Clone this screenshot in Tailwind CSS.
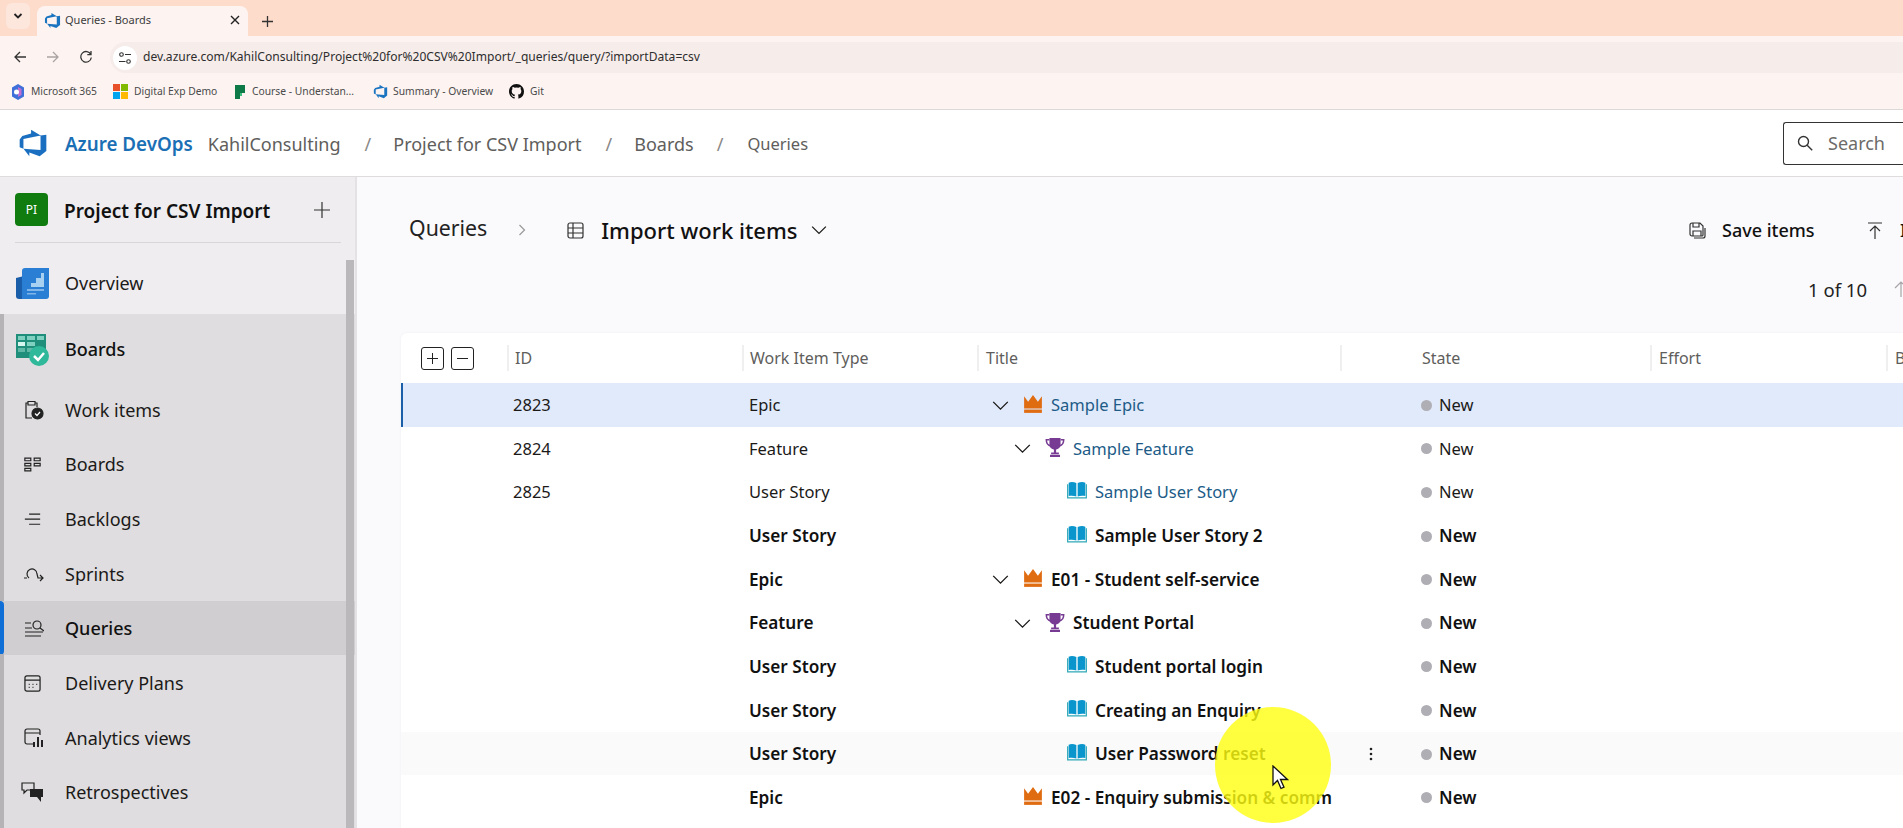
<!DOCTYPE html>
<html lang="en">
<head>
<meta charset="UTF-8">
<title>Queries - Boards</title>
<script src="https://cdn.jsdelivr.net/npm/@tailwindcss/browser@4"></script>
</head>
<body class="h-[828px] w-[1903px] overflow-hidden bg-white font-['Noto_Sans',sans-serif] text-[#1b1a19]">
<svg class="hidden">
  <symbol id="ado" viewBox="0 0 18 18"><path fill="currentColor" d="M17 4v9.74l-4 3.28-6.2-2.26V17l-3.51-4.59 10.23.8V4.44zm-3.41.49L7.85 1v2.29L2.58 4.84 1 6.87v4.61l2.26 1V6.57z"/></symbol>
  <symbol id="crown" viewBox="0 0 18 18"><path fill="#e06c12" d="M1 2l3.6 5L9 1l4.4 6L17 2v11H1z"/><path fill="#e06c12" d="M1 14h16v3H1z"/></symbol>
  <symbol id="trophy" viewBox="0 0 18 18"><path fill="none" stroke="#773b93" stroke-width="1.4" d="M4 2.5H1.2c0 3 1 5 3.8 5.5M14 2.5h2.8c0 3-1 5-3.8 5.5"/><path fill="#773b93" d="M4 1h10v6c0 2.6-2 4-4 4.2V14h2.5v1.6H5.500V14H8v-2.800C6 11 4 9.600 4 7z"/><path fill="#773b93" d="M4.500 16h9v2h-9z"/></symbol>
  <symbol id="book" viewBox="0 0 18 18"><path fill="#0a96cc" d="M1.500 1.500C3.500.8 6 .8 8.400 1.800V14C6 13 3.500 13 1.500 13.600zM16.500 1.500C14.500.8 12 .8 9.600 1.800V14C12 13 14.500 13 16.500 13.600z"/><path fill="none" stroke="#2fa8b8" stroke-width="1.100" d="M.6 3v12.200h16.800V3"/></symbol>
  <symbol id="chev" viewBox="0 0 14 14"><path fill="none" stroke="#1b1a19" stroke-width="1.100" d="M1 4l6 6 6-6"/></symbol>
</svg>

<!-- browser chrome -->
<div class="flex h-[36px] items-end bg-[#fedccb]">
  <div class="mb-[5px] ml-[6px] flex h-[26px] w-[24px] items-center justify-center self-center rounded-md bg-[#fde6dc]">
    <svg width="10" height="10" viewBox="0 0 10 10"><path fill="none" stroke="#222" stroke-width="1.800" d="M1.500 3l3.500 3.500L8.500 3"/></svg>
  </div>
  <div class="ml-[7px] flex h-[30px] w-[211px] items-center rounded-t-lg bg-[#fdf4f2] pb-[2px] pl-[7px] pr-[8px]">
    <svg class="h-[17px] w-[17px] text-[#1b74c0]"><use href="#ado"/></svg>
    <span class="ml-[4px] flex-1 text-[11px] text-[#3c3c3c]">Queries - Boards</span>
    <svg width="10" height="10" viewBox="0 0 10 10"><path stroke="#222" stroke-width="1.400" d="M1 1l8 8M9 1l-8 8"/></svg>
  </div>
  <svg class="mb-[9px] ml-[14px]" width="11" height="11" viewBox="0 0 11 11"><path stroke="#333" stroke-width="1.300" d="M5.500 0v11M0 5.500h11"/></svg>
</div>
<div class="flex h-[38px] items-start bg-[#fdf4f2] pl-[13px] pt-[6px]">
  <svg class="mt-[8px]" width="14" height="14" viewBox="0 0 14 14" fill="none" stroke="#333" stroke-width="1.300"><path d="M13 7H2M7 2L2 7l5 5"/></svg>
  <svg class="ml-[19px] mt-[8px]" width="14" height="14" viewBox="0 0 14 14" fill="none" stroke="#a9a3a3" stroke-width="1.300"><path d="M1 7h11M7 2l5 5-5 5"/></svg>
  <svg class="ml-[19px] mt-[8px]" width="14" height="14" viewBox="0 0 14 14" fill="none" stroke="#333" stroke-width="1.300"><path d="M11.800 4.500A5.300 5.300 0 1 0 12.300 7.500M12 1v3.700H8.300"/></svg>
  <div class="ml-[17px] flex h-[31px] flex-1 items-center rounded-l-full bg-[#f6ecea] pl-[3px]">
    <div class="flex h-[24px] w-[24px] items-center justify-center rounded-full bg-white">
      <svg width="14" height="14" viewBox="0 0 14 14" fill="none" stroke="#333" stroke-width="1.100"><circle cx="3.500" cy="3.500" r="1.800"/><circle cx="10.500" cy="10.500" r="1.800"/><path d="M7 3.500h6M1 10.500h6.500"/></svg>
    </div>
    <span class="ml-[6px] text-[12.070px] text-[#2e2e2e]">dev.azure.com/KahilConsulting/Project%20for%20CSV%20Import/_queries/query/?importData=csv</span>
  </div>
</div>
<div class="flex h-[36px] items-center border-b border-[#dcd8d8] bg-[#fdf4f2] pl-[11px] text-[10.300px] text-[#4a4a4a]">
  <svg width="14" height="16" viewBox="0 0 14 16"><path fill="#3f6fd8" d="M7 0l6 3.500v9L7 16l-6-3.500v-9z"/><path fill="#c06fd0" d="M7 3l3.500 2v6L7 13z"/><circle cx="5.500" cy="8" r="2.500" fill="#fff"/></svg>
  <span class="ml-[6px] w-[82px]">Microsoft 365</span>
  <div class="grid h-[15px] w-[15px] grid-cols-2 gap-px"><i class="bg-[#e8502a]"></i><i class="bg-[#7fba00]"></i><i class="bg-[#00a4ef]"></i><i class="bg-[#ffb900]"></i></div>
  <span class="ml-[6px] w-[100px]">Digital Exp Demo</span>
  <svg width="12" height="16" viewBox="0 0 12 16"><path fill="#0e7a47" d="M1 1h10v8H6v6H1z"/><path fill="#40c080" d="M6 9h2v3H6z"/></svg>
  <span class="ml-[6px] w-[121px]">Course - Understan...</span>
  <svg class="h-[15px] w-[15px] text-[#1b74c0]"><use href="#ado"/></svg>
  <span class="ml-[5px] w-[116px]">Summary - Overview</span>
  <svg width="15" height="15" viewBox="0 0 16 16"><path fill="#111" d="M8 0C3.580 0 0 3.580 0 8c0 3.540 2.290 6.530 5.470 7.590.4.070.55-.17.55-.38 0-.19-.01-.82-.01-1.490-2.010.37-2.530-.49-2.690-.94-.09-.23-.48-.94-.82-1.130-.28-.15-.68-.52-.01-.53.630-.01 1.080.58 1.230.82.720 1.210 1.870.870 2.330.660.070-.520.280-.870.510-1.070-1.780-.200-3.640-.890-3.640-3.950 0-.870.310-1.590.820-2.150-.080-.200-.360-1.020.080-2.120 0 0 .670-.210 2.200.820a7.420 7.420 0 0 1 4 0c1.530-1.040 2.200-.820 2.200-.820.440 1.100.160 1.920.080 2.120.510.560.820 1.270.820 2.150 0 3.070-1.870 3.750-3.650 3.950.290.250.540.730.540 1.480 0 1.070-.010 1.930-.010 2.200 0 .210.150.460.550.380A8.010 8.010 0 0 0 16 8c0-4.420-3.580-8-8-8z"/></svg>
  <span class="ml-[6px]">Git</span>
</div>

<!-- devops header -->
<header class="flex h-[67px] items-center border-b border-[#dedcdc] bg-white pl-[18px] text-[18px] text-[#605e5c]">
  <svg class="h-[30px] w-[30px] text-[#1a6fc0]"><use href="#ado"/></svg>
  <span class="ml-[17px] pt-[3px] text-[18.800px] font-semibold text-[#1a6fb5]">Azure DevOps</span>
  <span class="ml-[15px] pt-[3px]">KahilConsulting</span>
  <span class="ml-[24px] pt-[3px] text-[#8a8886]">/</span>
  <span class="ml-[22px] pt-[3px]">Project for CSV Import</span>
  <span class="ml-[24px] pt-[3px] text-[#8a8886]">/</span>
  <span class="ml-[22px] pt-[3px]">Boards</span>
  <span class="ml-[23px] pt-[3px] text-[#8a8886]">/</span>
  <span class="ml-[24px] pt-[3px] text-[16.500px]">Queries</span>
  <div class="ml-auto flex h-[43px] w-[120px] items-center rounded-l-[3px] border border-r-0 border-[#333] pl-[13px]">
    <svg width="16" height="16" viewBox="0 0 16 16" fill="none" stroke="#333" stroke-width="1.400"><circle cx="6.500" cy="6.500" r="5"/><path d="M10.200 10.200l5 5"/></svg>
    <span class="ml-[15px] text-[#6d6b69]">Search</span>
  </div>
</header>

<div class="flex h-[651px]">
  <!-- sidebar -->
  <aside class="relative w-[357px] shrink-0 border-r-2 border-[#e4e2e4] bg-[#efedef]">
    <div class="ml-[15px] mr-[14px] flex h-[66px] items-center border-b border-[#d8d6d8] pr-[11px]">
      <div class="flex h-[33px] w-[33px] items-center justify-center rounded-[4px] bg-[#107c10] text-[12px] text-white">PI</div>
      <span class="ml-[16px] flex-1 pt-[4px] text-[19px] font-semibold text-[#111]">Project for CSV Import</span>
      <svg width="16" height="16" viewBox="0 0 16 16"><path stroke="#333" stroke-width="1.200" d="M8 0v16M0 8h16"/></svg>
    </div>
    <div class="flex h-[71px] items-center pl-[16px] pt-[10px] text-[18px]">
      <svg width="33" height="31" viewBox="0 0 33 31"><path fill="#1a5da8" d="M0 10l8-2v23H3a3 3 0 0 1-3-3z"/><path fill="#2a7fd4" d="M6 3a3 3 0 0 1 3-3h24v28a3 3 0 0 1-3 3H6z"/><path fill="#a8d0f0" d="M11 19h4v-4h5v-5h5V5h3v14z"/><path fill="#7fb5e8" d="M11 21h17v2H11zM11 25h9v1.500H11z"/></svg>
      <span class="ml-[16px]">Overview</span>
    </div>
    <div class="h-[516px] bg-[#dfdddf] text-[18px]">
      <div class="flex h-[68px] items-center pl-[16px] pt-[2px]">
        <svg width="33" height="33" viewBox="0 0 33 33"><path fill="#1f8f7c" d="M0 1h30v24H0z"/><path fill="#7fd0bf" d="M2 3h7v4H2zM11 3h8v4h-8zM21 3h7v4h-7zM11 9h8v4h-8z"/><path fill="#d6f5ee" d="M2 9h7v4H2z"/><path fill="#5fb8a6" d="M2 15h7v4H2zM11 15h8v4h-8z"/><circle cx="23" cy="23" r="10" fill="#2fb89a"/><path fill="none" stroke="#fff" stroke-width="2.500" d="M18 23l4 4 6-7"/></svg>
        <span class="ml-[16px] font-medium text-[#111]">Boards</span>
      </div>
      <div class="flex h-[54.670px] items-center pl-[24px] pt-[2px]">
        <svg width="20" height="20" viewBox="0 0 20 20" fill="none" stroke="#222" stroke-width="1.200"><path d="M4 3H2v15h6M11 3h2v4M4 1.500h7V5H4z"/><circle cx="13.500" cy="13.500" r="5.500" fill="#222"/><path stroke="#fff" d="M11 13.500l2 2 3-3.500"/></svg>
        <span class="ml-[21px]">Work items</span>
      </div>
      <div class="flex h-[54.670px] items-center pl-[24px] pt-[2px]">
        <svg width="17" height="16" viewBox="0 0 20 18" fill="none" stroke="#222" stroke-width="1.400"><path d="M1 1h7v3H1zM1 7h7v3H1zM1 13h7v3H1zM12 1h7v3h-7zM12 7h7v3h-7z"/></svg>
        <span class="ml-[24px]">Boards</span>
      </div>
      <div class="flex h-[54.670px] items-center pl-[24px] pt-[2px]">
        <svg width="17" height="16" viewBox="0 0 20 18" fill="none" stroke="#222" stroke-width="1.400"><path d="M6 2h13M1 8h18M6 14h13"/></svg>
        <span class="ml-[24px]">Backlogs</span>
      </div>
      <div class="flex h-[54.670px] items-center pl-[24px] pt-[2px]">
        <svg width="20" height="18" viewBox="0 0 20 18" fill="none" stroke="#222" stroke-width="1.200"><path d="M0 13h3M5 13a5 5 0 1 1 8-4l1 4h5M16 10l3 3-3 3"/></svg>
        <span class="ml-[21px]">Sprints</span>
      </div>
      <div class="relative flex h-[54.670px] items-center bg-[#d0ced0] pl-[24px] pt-[2px]">
        <div class="absolute left-0 top-0 h-full w-[4px] rounded-r bg-[#0f6fd6]"></div>
        <svg width="20" height="18" viewBox="0 0 20 18" fill="none" stroke="#222" stroke-width="1.200"><circle cx="13" cy="5" r="4"/><path d="M16 8l4 3M1 3h6M1 8h7M1 12h18M1 16h16"/></svg>
        <span class="ml-[21px] font-medium text-[#111]">Queries</span>
      </div>
      <div class="flex h-[54.670px] items-center pl-[24px] pt-[2px]">
        <svg width="17" height="17" viewBox="0 0 18 18" fill="none" stroke="#222" stroke-width="1.300"><rect x="1" y="1" width="16" height="16" rx="2"/><path d="M1 5.500h16M5 10h1M9 10h1M13 10h1M5 13h1M9 13h1"/></svg>
        <span class="ml-[24px]">Delivery Plans</span>
      </div>
      <div class="flex h-[54.670px] items-center pl-[24px] pt-[2px]">
        <svg width="20" height="20" viewBox="0 0 20 20" fill="none" stroke="#222" stroke-width="1.200"><path d="M9 16H3a2 2 0 0 1-2-2V3a2 2 0 0 1 2-2h11a2 2 0 0 1 2 2v4M1 5h15"/><path stroke-width="2" d="M10 19v-5M14 19V9M18 19v-7"/></svg>
        <span class="ml-[21px]">Analytics views</span>
      </div>
      <div class="flex h-[54.670px] items-center pl-[21px] pt-[2px]">
        <svg width="23" height="21" viewBox="0 0 23 21"><path fill="none" stroke="#222" stroke-width="1.200" d="M1 1h12v7H6l-3 3V8H1z"/><path fill="#222" d="M9 7h13v8h-2v5l-4-5H9z"/></svg>
        <span class="ml-[21px]">Retrospectives</span>
      </div>
    </div>
    <!-- scrollbars -->
    <div class="absolute left-0 top-[137px] h-[287px] w-[4px] bg-[#b5b3b5]"></div>
    <div class="absolute bottom-0 left-0 h-[174px] w-[4px] bg-[#b5b3b5]"></div>
    <div class="absolute right-[1px] top-[83px] bottom-0 w-[8px] bg-[#bab8ba]"></div>
  </aside>

  <!-- main -->
  <main class="flex-1 overflow-hidden bg-[#faf9fb] pl-[44px]">
    <div class="flex h-[106px] items-center">
      <span class="-mt-[5px] ml-[8px] text-[21.300px] text-[#222]">Queries</span>
      <svg class="ml-[31px]" width="8" height="12" viewBox="0 0 8 12"><path fill="none" stroke="#999" stroke-width="1.200" d="M1.500 1l5 5-5 5"/></svg>
      <svg class="ml-[41px]" width="17" height="17" viewBox="0 0 17 17" fill="none" stroke="#333" stroke-width="1.200"><rect x="1" y="1" width="15" height="15" rx="2"/><path d="M1 6h15M1 11h15M6 1v15"/></svg>
      <span class="ml-[17px] text-[22px] font-medium text-[#111]">Import work items</span>
      <svg class="ml-[13px]" width="16" height="16"><use href="#chev"/></svg>
      <div class="ml-auto flex items-center text-[18px] font-medium text-[#111]">
        <svg width="17" height="17" viewBox="0 0 17 17" fill="none" stroke="#333" stroke-width="1.200"><path d="M1 3a2 2 0 0 1 2-2h8l3 3v9a1 1 0 0 1-1 1H3a2 2 0 0 1-2-2zM4 1v4h6V1M4 14V9h8v5M16 6v8a2 2 0 0 1-2 2H5"/></svg>
        <span class="ml-[16px] w-[146px]">Save items</span>
        <svg width="14" height="17" viewBox="0 0 14 17" fill="none" stroke="#333" stroke-width="1.200"><path d="M0 1h14M7 17V4M2 9l5-5 5 5"/></svg>
        <span class="ml-[18px] w-[3px] overflow-hidden">Import</span>
      </div>
    </div>
    <div class="flex h-[50px] items-start justify-end">
      <span class="-mt-[7px] mr-[27px] text-[18.500px] text-[#222]">1 of 10</span>
      <svg class="-mt-[3px]" width="9" height="17" viewBox="0 0 9 17" fill="none" stroke="#a6a4a6" stroke-width="1.200"><path d="M7 17V2M1 8l6-6 2 2"/></svg>
    </div>
    <section class="h-[495px] rounded-tl-md bg-white shadow-[0_0_3px_rgba(0,0,0,0.05)]">
      <div class="grid h-[50px] grid-cols-[106px_235px_235px_363px_74px_236px_236px_1fr] items-center text-[16px] text-[#605e5c]">
        <div class="flex gap-[7px] pl-[20px]">
          <span class="flex h-[23px] w-[23px] items-center justify-center rounded-[3px] border border-[#222]"><svg width="11" height="11" viewBox="0 0 11 11"><path stroke="#222" d="M5.500 0v11M0 5.500h11"/></svg></span>
          <span class="flex h-[23px] w-[23px] items-center justify-center rounded-[3px] border border-[#222]"><svg width="11" height="11" viewBox="0 0 11 11"><path stroke="#222" d="M0 5.500h11"/></svg></span>
        </div>
        <div class="flex h-[26px] items-center border-l-2 border-[#f0eff0] pl-[6px]">ID</div>
        <div class="flex h-[26px] items-center border-l-2 border-[#f0eff0] pl-[6px]">Work Item Type</div>
        <div class="flex h-[26px] items-center border-l-2 border-[#f0eff0] pl-[7px]">Title</div>
        <div class="h-[26px] border-l-2 border-[#f0eff0]"></div>
        <div class="flex h-[26px] items-center pl-[8px]">State</div>
        <div class="flex h-[26px] items-center border-l-2 border-[#f0eff0] pl-[7px]">Effort</div>
        <div class="flex h-[26px] items-center border-l-2 border-[#f0eff0] pl-[7px]">B</div>
      </div>
      <div id="rows"></div>
    </section>
  </main>
</div>

<!-- screen recorder cursor highlight -->
<div class="absolute left-[1215px] top-[707px] h-[116px] w-[116px] rounded-full bg-[#ffff10]/80"></div>
<svg class="absolute left-[1272px] top-[765px]" width="17" height="25" viewBox="0 0 17 25"><path fill="#fff" stroke="#111" stroke-width="1.300" d="M1 1v19l4.500-4.500 3.500 8 3-1.300-3.500-7.700H15.500z"/></svg>

<script>
  // rows of the query result
  const rows = [
    { id: '2823', type: 'Epic', title: 'Sample Epic', icon: 'crown', depth: 0, chevron: true, saved: true, selected: true },
    { id: '2824', type: 'Feature', title: 'Sample Feature', icon: 'trophy', depth: 1, chevron: true, saved: true },
    { id: '2825', type: 'User Story', title: 'Sample User Story', icon: 'book', depth: 2, saved: true },
    { id: '', type: 'User Story', title: 'Sample User Story 2', icon: 'book', depth: 2 },
    { id: '', type: 'Epic', title: 'E01 - Student self-service', icon: 'crown', depth: 0, chevron: true },
    { id: '', type: 'Feature', title: 'Student Portal', icon: 'trophy', depth: 1, chevron: true },
    { id: '', type: 'User Story', title: 'Student portal login', icon: 'book', depth: 2 },
    { id: '', type: 'User Story', title: 'Creating an Enquiry', icon: 'book', depth: 2 },
    { id: '', type: 'User Story', title: 'User Password reset', icon: 'book', depth: 2, hover: true },
    { id: '', type: 'Epic', title: 'E02 - Enquiry submission & comm', icon: 'crown', depth: 0 },
  ];

  document.getElementById('rows').innerHTML = rows.map(row => {
    const bg = row.selected ? 'bg-[#e1eafa] shadow-[inset_2px_0_0_#1a5fa8]' : row.hover ? 'bg-[#fafafa]' : 'bg-white';
    const weight = row.saved ? 'font-normal text-[16.500px]' : 'font-semibold text-[17.200px] text-[#111]';
    const titleColor = row.saved ? 'text-[#205b87]' : '';
    const chevron = row.chevron ? '<svg class="h-[17px] w-[17px]"><use href="#chev"/></svg>' : '';
    const kebab = row.hover ? '<svg width="4" height="14" viewBox="0 0 4 14"><circle cx="2" cy="2" r="1.300" fill="#222"/><circle cx="2" cy="7" r="1.300" fill="#222"/><circle cx="2" cy="12" r="1.300" fill="#222"/></svg>' : '';
    return `<div class="grid h-[43.600px] grid-cols-[106px_235px_235px_363px_74px_236px_236px_1fr] items-center pt-[1px] ${bg} ${weight}">
      <div></div>
      <div class="pl-[6px]">${row.id}</div>
      <div class="pl-[7px]">${row.type}</div>
      <div class="flex items-center" style="padding-left:${15 + row.depth * 22}px">
        <span class="flex h-[17px] w-[17px] items-center">${chevron}</span>
        <svg class="-mt-[3px] ml-[14px] h-[20px] w-[20px] shrink-0"><use href="#${row.icon}"/></svg>
        <span class="ml-[8px] whitespace-nowrap ${titleColor}">${row.title.replace('&', '&amp;')}</span>
      </div>
      <div class="pl-[29px]">${kebab}</div>
      <div class="flex items-center pl-[7px]"><span class="mr-[7px] h-[11px] w-[11px] rounded-full bg-[#aeaeb4]"></span>New</div>
      <div></div>
      <div></div>
    </div>`;
  }).join('');
</script>
</body>
</html>
